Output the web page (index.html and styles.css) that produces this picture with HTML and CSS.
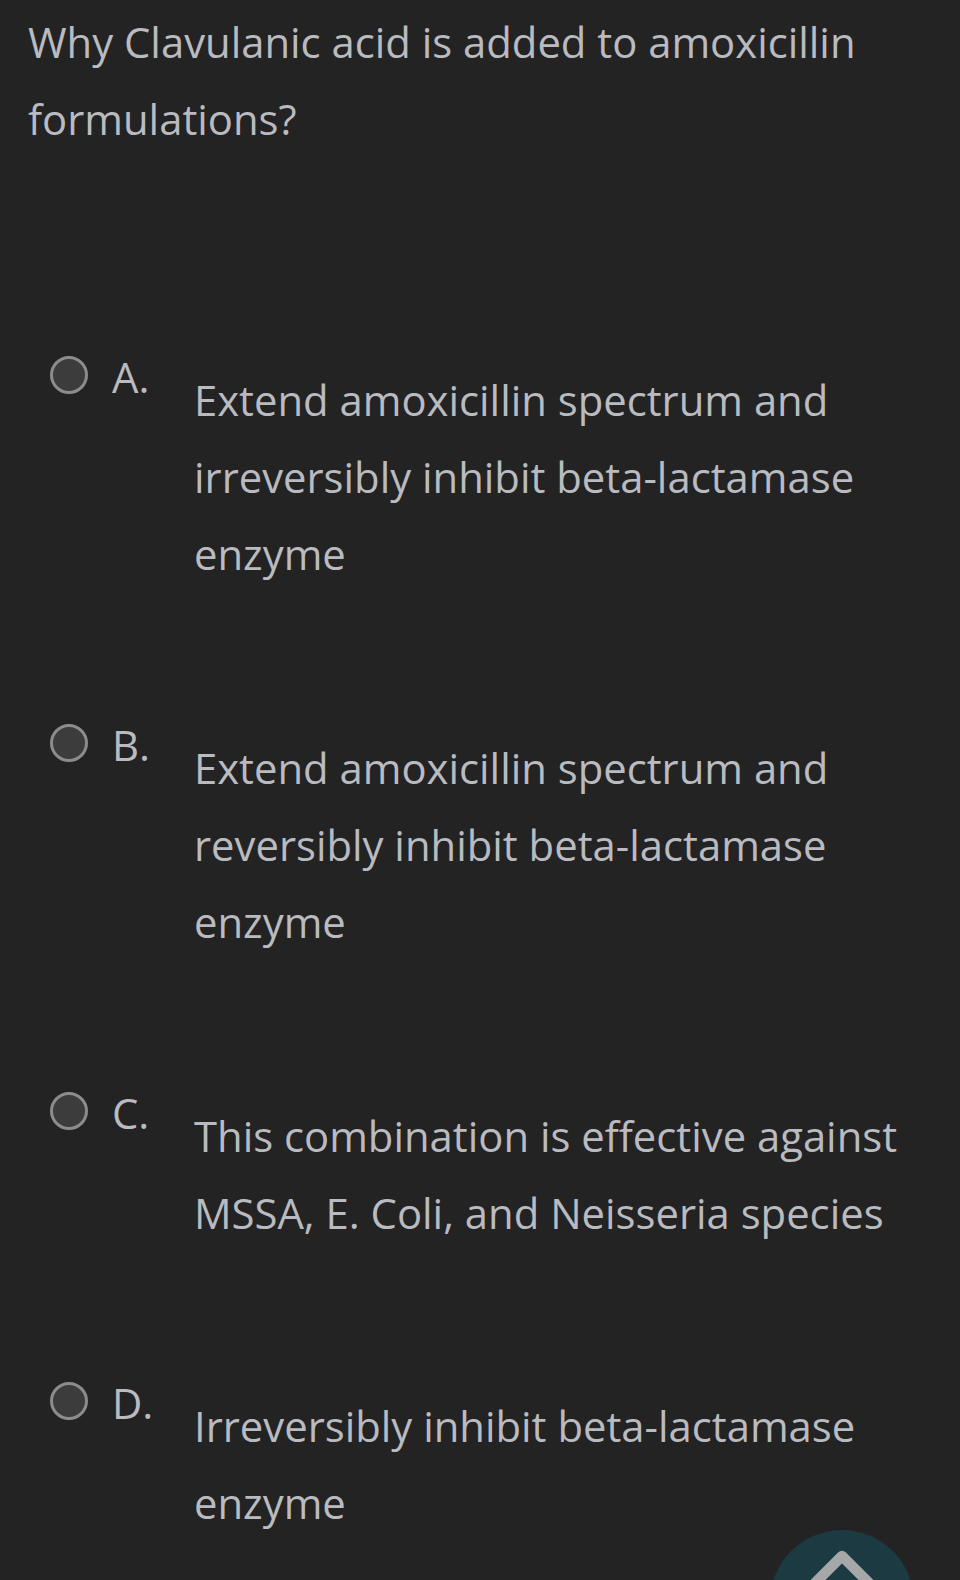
FILE: index.html
```html
<!DOCTYPE html>
<html lang="en">
<head>
<meta charset="utf-8">
<title>Question</title>
<link rel="stylesheet" href="styles.css">
</head>
<body>
<main class="quiz">
  <h1 class="question">Why Clavulanic acid is added to amoxicillin formulations?</h1>
  <ul class="options">
    <li class="option">
      <div class="control"><span class="radio"></span><span class="letter">A.</span></div>
      <div class="answer">Extend amoxicillin spectrum and irreversibly inhibit beta-lactamase enzyme</div>
    </li>
    <li class="option">
      <div class="control"><span class="radio"></span><span class="letter">B.</span></div>
      <div class="answer">Extend amoxicillin spectrum and reversibly inhibit beta-lactamase enzyme</div>
    </li>
    <li class="option">
      <div class="control"><span class="radio"></span><span class="letter">C.</span></div>
      <div class="answer">This combination is effective against MSSA, E. Coli, and Neisseria species</div>
    </li>
    <li class="option">
      <div class="control"><span class="radio"></span><span class="letter">D.</span></div>
      <div class="answer">Irreversibly inhibit beta-lactamase enzyme</div>
    </li>
  </ul>
</main>
<button class="to-top" aria-label="Back to top">
  <svg class="to-top-icon" width="80" height="60" viewBox="0 0 80 60" aria-hidden="true">
    <polyline points="10,47 40,17 70,47" fill="none" stroke="#a5a7a9" stroke-width="10.5" stroke-linejoin="round" stroke-linecap="butt"/>
  </svg>
</button>
</body>
</html>
```
FILE: styles.css
```css
html {
  background: #232323;
}
body {
  margin: 0;
  min-height: 1580px;
  background: #232323;
  color: #b9bbc0;
  font-family: "Open Sans", "Noto Sans", sans-serif;
  font-size: 41.8px;
  line-height: 77px;
  overflow: hidden;
}
.quiz {
  padding: 3px 26px 0 28px;
}
.question {
  margin: 0;
  font-size: inherit;
  font-weight: 400;
  line-height: 77px;
}
.options {
  list-style: none;
  margin: 199px 0 0 0;
  padding: 0;
  display: flex;
  flex-direction: column;
  gap: 131.8px;
}
.option {
  display: flex;
  align-items: flex-start;
}
.control {
  display: flex;
  align-items: flex-start;
  width: 166px;
  flex: none;
  padding-left: 22px;
  box-sizing: border-box;
}
.radio {
  width: 38px;
  height: 38px;
  box-sizing: border-box;
  border: 3px solid #8c8c8c;
  border-radius: 50%;
  background: #3c3c3c;
  flex: none;
}
.letter {
  margin-left: 24px;
  margin-top: 2px;
  line-height: 38px;
}
.answer {
  margin-top: 5px;
  flex: 1;
  line-height: 77px;
}
.to-top {
  position: fixed;
  left: 770px;
  top: 1530px;
  width: 144px;
  height: 144px;
  border: 0;
  padding: 0;
  border-radius: 50%;
  background: #1c3a42;
  display: flex;
  justify-content: center;
  align-items: flex-start;
}
.to-top-icon {
  display: block;
  margin-top: 9px;
}
```
